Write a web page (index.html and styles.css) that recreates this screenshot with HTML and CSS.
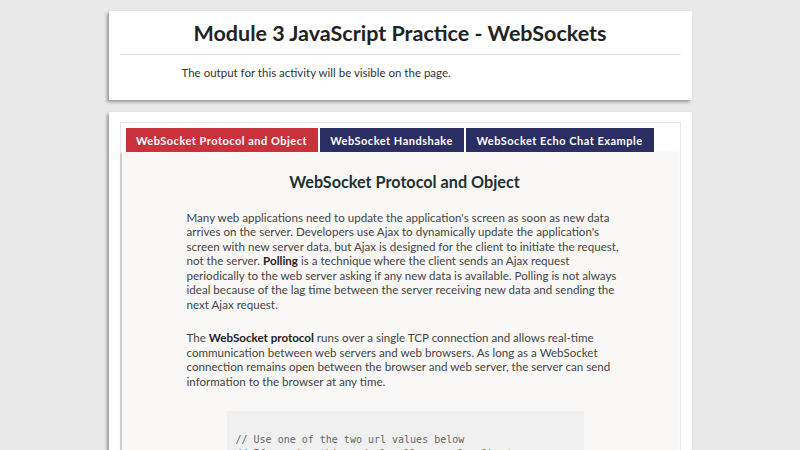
FILE: index.html
```html
<!DOCTYPE html>
<html lang="en">
<head>
<meta charset="utf-8">
<title>Module 3 JavaScript Practice - WebSockets</title>
<link rel="stylesheet" href="styles.css">
</head>
<body>
<header class="card header-card">
  <h1 class="title">Module 3 JavaScript Practice - WebSockets</h1>
  <hr class="rule">
  <p class="intro">The output for this activity will be visible on the page.</p>
</header>
<main class="card main-card">
  <div class="frame">
    <nav class="tabs">
      <span class="tab tab-active">WebSocket Protocol and Object</span>
      <span class="tab">WebSocket Handshake</span>
      <span class="tab">WebSocket Echo Chat Example</span>
    </nav>
    <section class="panel">
      <h2 class="panel-title">WebSocket Protocol and Object</h2>
      <p class="text">Many web applications need to update the application's screen as soon as new data arrives on the server. Developers use Ajax to dynamically update the application's screen with new server data, but Ajax is designed for the client to initiate the request, not the server. <strong>Polling</strong> is a technique where the client sends an Ajax request periodically to the web server asking if any new data is available. Polling is not always ideal because of the lag time between the server receiving new data and sending the next Ajax request.</p>
      <p class="text">The <strong>WebSocket protocol</strong> runs over a single TCP connection and allows real-time communication between web servers and web browsers. As long as a WebSocket connection remains open between the browser and web server, the server can send information to the browser at any time.</p>
      <pre class="code">// Use one of the two url values below
// If running this code locally, use localhost
let url = "ws://localhost:3000";</pre>
    </section>
  </div>
</main>
</body>
</html>
```
FILE: styles.css
```css
html, body {
  margin: 0;
  padding: 0;
}
body {
  background: #e9e9e9;
  font-family: "Lato", "Open Sans", sans-serif;
  color: #333;
  padding-top: 11px;
  height: 450px;
  overflow: hidden;
}
.card {
  width: 583px;
  margin: 0 auto;
  background: #fff;
  box-sizing: border-box;
  box-shadow: -2px 2px 3px rgba(0, 0, 0, 0.35);
}
.header-card {
  padding: 9px 11px 0;
  height: 89px;
}
.title {
  margin: 0;
  font-size: 21.5px;
  font-weight: 700;
  text-align: center;
  color: #222;
  line-height: 26px;
}
.rule {
  border: 0;
  border-top: 1px solid #e2e2e2;
  margin: 8px 0 0;
}
.intro {
  margin: 11px 0 0 62px;
  font-size: 11.5px;
  color: #333;
}
.main-card {
  margin-top: 12px;
  padding: 10px 11px 0;
  height: 400px;
}
.frame {
  border: 1px solid #e6e6e6;
  border-bottom: 0;
  height: 100%;
  box-sizing: border-box;
}
.tabs {
  display: flex;
  gap: 2px;
  padding: 5px 5px 0;
}
.tab {
  display: flex;
  align-items: center;
  justify-content: center;
  height: 24px;
  background: #2b2e63;
  color: #fff;
  font-size: 11px;
  font-weight: 700;
  letter-spacing: 0.5px;
}
.tab:nth-child(1) { width: 192px; }
.tab:nth-child(2) { width: 144px; }
.tab:nth-child(3) { width: 188px; }
.tab-active {
  background: #c9323a;
}
.panel {
  margin: 0 1px;
  background: #f9f8f7;
  box-shadow: -1px 1px 2px rgba(0, 0, 0, 0.3);
  padding: 20px 56px 20px 65px;
  height: 300px;
}
.panel-title {
  margin: 0 0 19.5px;
  text-align: center;
  font-size: 16.2px;
  font-weight: 700;
  color: #1f3130;
}
.text {
  margin: 0 0 19px;
  font-size: 11.6px;
  line-height: 14.5px;
  color: #444;
}
.text strong {
  color: #222;
}
.code {
  margin: 22px 39px 0 40px;
  background: #f0f0f0;
  padding: 22px 9px 8px;
  font-family: "DejaVu Sans Mono", monospace;
  font-size: 10px;
  line-height: 14px;
  color: #666;
}
```
